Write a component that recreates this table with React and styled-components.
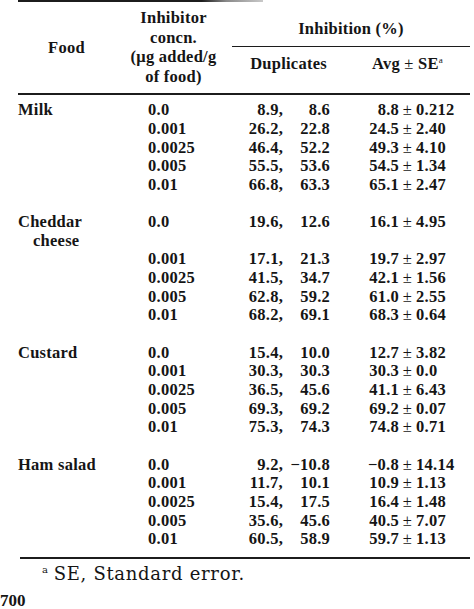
import React from "react";
import styled, { createGlobalStyle } from "styled-components";

const GlobalStyle = createGlobalStyle`
  html, body {
    margin: 0;
    padding: 0;
    background: #ffffff;
    overflow: hidden;
  }
  body {
    color: #151515;
    font-family: "Liberation Serif", "Times New Roman", serif;
  }
`;

const groups = [
  {
    food: ["Milk"],
    rows: [
      ["0.0", "8.9,", "8.6", "8.8", "0.212"],
      ["0.001", "26.2,", "22.8", "24.5", "2.40"],
      ["0.0025", "46.4,", "52.2", "49.3", "4.10"],
      ["0.005", "55.5,", "53.6", "54.5", "1.34"],
      ["0.01", "66.8,", "63.3", "65.1", "2.47"]
    ]
  },
  {
    food: ["Cheddar", "cheese"],
    rows: [
      ["0.0", "19.6,", "12.6", "16.1", "4.95"],
      ["0.001", "17.1,", "21.3", "19.7", "2.97"],
      ["0.0025", "41.5,", "34.7", "42.1", "1.56"],
      ["0.005", "62.8,", "59.2", "61.0", "2.55"],
      ["0.01", "68.2,", "69.1", "68.3", "0.64"]
    ]
  },
  {
    food: ["Custard"],
    rows: [
      ["0.0", "15.4,", "10.0", "12.7", "3.82"],
      ["0.001", "30.3,", "30.3", "30.3", "0.0"],
      ["0.0025", "36.5,", "45.6", "41.1", "6.43"],
      ["0.005", "69.3,", "69.2", "69.2", "0.07"],
      ["0.01", "75.3,", "74.3", "74.8", "0.71"]
    ]
  },
  {
    food: ["Ham salad"],
    rows: [
      ["0.0", "9.2,", "\u221210.8", "\u22120.8", "14.14"],
      ["0.001", "11.7,", "10.1", "10.9", "1.13"],
      ["0.0025", "15.4,", "17.5", "16.4", "1.48"],
      ["0.005", "35.6,", "45.6", "40.5", "7.07"],
      ["0.01", "60.5,", "58.9", "59.7", "1.13"]
    ]
  }
];

const App = () => {
  return (
    <>
      <GlobalStyle />
      <Page>
        <Rule $width="245px" $fade />

        <HeaderRow>
          <FoodHead>Food</FoodHead>
          <ConcHead>
            Inhibitor
            <br />
            concn.
            <br />
            (&mu;g added/g
            <br />
            of food)
          </ConcHead>
          <InhibitionHead>
            <InhibitionTitle>Inhibition (%)</InhibitionTitle>
            <Rule $thin />
            <SubHeads>
              <SubHead>Duplicates</SubHead>
              <SubHead>
                Avg <Pm>&plusmn;</Pm> SE<Sup>a</Sup>
              </SubHead>
            </SubHeads>
          </InhibitionHead>
        </HeaderRow>

        <Rule $width="452px" $thin />

        <Body>
          {groups.map((group) => (
            <Group key={group.food.join(" ")}>
              {group.rows.map((row, i) => (
                <Row key={row[0]}>
                  <FoodCell>
                    {i === 0 &&
                      group.food.map((line, j) => (
                        <FoodLine key={line} $indent={j > 0}>
                          {line}
                        </FoodLine>
                      ))}
                  </FoodCell>
                  <ConcCell>{row[0]}</ConcCell>
                  <DupCell>
                    <span>{row[1]}</span>
                    <span>{row[2]}</span>
                  </DupCell>
                  <AvgCell>
                    <AvgValue>{row[3]}</AvgValue>
                    <Pm>&plusmn;</Pm>
                    <SeValue>{row[4]}</SeValue>
                  </AvgCell>
                </Row>
              ))}
            </Group>
          ))}
        </Body>

        <BottomRule />

        <Footnote>
          <Sup>a</Sup>SE, Standard error.
        </Footnote>
        <PageNumber>700</PageNumber>
      </Page>
    </>
  );
};

export default App;

const Page = styled.div`
  width: 474px;
  height: 609px;
  padding-left: 18px;
  box-sizing: border-box;
  overflow: hidden;
  font-weight: bold;
  font-size: 16.5px;
  letter-spacing: 0.25px;
`;

const Rule = styled.div`
  width: ${(p) => p.$width || "100%"};
  height: ${(p) => (p.$thin ? "1.5px" : "2px")};
  background: ${(p) =>
    p.$fade
      ? "linear-gradient(to right, #1c1c1c 0%, #1c1c1c 75%, rgba(40,40,40,0.55) 85%, rgba(40,40,40,0.25) 100%)"
      : "#1c1c1c"};
`;

const BottomRule = styled.div`
  width: 450px;
  height: 1.5px;
  margin-left: 2px;
  margin-top: 8.5px;
  background: #1c1c1c;
`;

const HeaderRow = styled.div`
  display: grid;
  grid-template-columns: 97px 117px 238px;
  height: 91px;
`;

const FoodHead = styled.div`
  display: flex;
  align-items: center;
  justify-content: center;
  line-height: 19px;
`;

const ConcHead = styled.div`
  text-align: center;
  padding-top: 6px;
  line-height: 19.5px;
`;

const InhibitionHead = styled.div`
  display: flex;
  flex-direction: column;
`;

const InhibitionTitle = styled.div`
  height: 43.5px;
  box-sizing: border-box;
  display: flex;
  align-items: flex-end;
  justify-content: center;
  padding-bottom: 8px;
  line-height: 19px;
`;

const SubHeads = styled.div`
  display: grid;
  grid-template-columns: 113px 125px;
  padding-top: 7px;
  line-height: 19px;
`;

const SubHead = styled.div`
  text-align: center;
`;

const Sup = styled.sup`
  font-size: 9px;
  font-weight: normal;
  vertical-align: 6px;
  line-height: 0;
`;

const Pm = styled.span`
  font-weight: normal;
  text-align: center;
`;

const Body = styled.div`
  padding-top: 6.7px;
`;

const Group = styled.div`
  & + & {
    margin-top: 18.65px;
  }
`;

const Row = styled.div`
  display: grid;
  grid-template-columns: 97px 117px 113px 125px;
  line-height: 18.65px;
  white-space: nowrap;
`;

const FoodCell = styled.div``;

const FoodLine = styled.div`
  padding-left: ${(p) => (p.$indent ? "15px" : "0")};
`;

const ConcCell = styled.div`
  padding-left: 33px;
`;

const DupCell = styled.div`
  display: grid;
  grid-template-columns: 51px 47px;
  text-align: right;
`;

const AvgCell = styled.div`
  display: grid;
  grid-template-columns: 54px 17px auto;
  align-items: start;
`;

const AvgValue = styled.span`
  text-align: right;
`;

const SeValue = styled.span`
  text-align: left;
`;

const Footnote = styled.div`
  margin-top: 5px;
  padding-left: 24px;
  font-family: "DejaVu Serif", "Liberation Serif", serif;
  font-weight: normal;
  font-size: 18px;
  letter-spacing: 0.7px;
  line-height: 19px;

  ${Sup} {
    font-size: 10px;
    vertical-align: 7px;
    margin-right: 5px;
  }
`;

const PageNumber = styled.div`
  margin-top: 9px;
  margin-left: -18px;
  line-height: 18px;
  font-size: 17px;
  letter-spacing: 0;
`;
